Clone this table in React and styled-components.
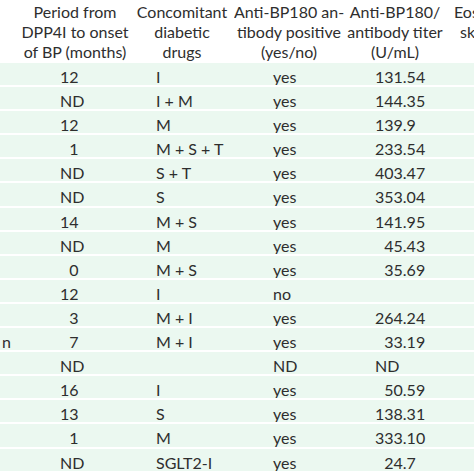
import React from "react";
import styled, { createGlobalStyle } from "styled-components";

const GlobalStyle = createGlobalStyle`
  html, body {
    margin: 0;
    padding: 0;
    background: #ffffff;
  }
  body {
    font-family: "Lato", "Liberation Sans", sans-serif;
    color: #2e2e2e;
  }
`;

const FS = "\u2007";

const rows = [
  ["", "12", "I", "yes", "131.54"],
  ["", "ND", "I + M", "yes", "144.35"],
  ["", "12", "M", "yes", "139.9"],
  ["", FS + "1", "M + S + T", "yes", "233.54"],
  ["", "ND", "S + T", "yes", "403.47"],
  ["", "ND", "S", "yes", "353.04"],
  ["", "14", "M + S", "yes", "141.95"],
  ["", "ND", "M", "yes", FS + "45.43"],
  ["", FS + "0", "M + S", "yes", FS + "35.69"],
  ["", "12", "I", "no", ""],
  ["", FS + "3", "M + I", "yes", "264.24"],
  ["n", FS + "7", "M + I", "yes", FS + "33.19"],
  ["", "ND", "", "ND", "ND"],
  ["", "16", "I", "yes", FS + "50.59"],
  ["", "13", "S", "yes", "138.31"],
  ["", FS + "1", "M", "yes", "333.10"],
  ["", "ND", "SGLT2-I", "yes", FS + "24.7"],
];

const App = () => {
  return (
    <>
      <GlobalStyle />
      <Page>
        <HeaderRow>
          <HeadCell />
          <HeadCell>
            Period from
            <br />
            DPP4I to onset
            <br />
            of BP (months)
          </HeadCell>
          <HeadCell>
            Concomitant
            <br />
            diabetic
            <br />
            drugs
          </HeadCell>
          <HeadCell>
            Anti-BP180 an-
            <br />
            tibody positive
            <br />
            (yes/no)
          </HeadCell>
          <HeadCell>
            Anti-BP180/
            <br />
            antibody titer
            <br />
            (U/mL)
          </HeadCell>
          <HeadCell $align="left">
            <HeadLine $indent={8}>Eosinophils</HeadLine>
            <HeadLine $indent={14}>skin lesion</HeadLine>
          </HeadCell>
        </HeaderRow>
        <Body>
          {rows.map((r, i) => (
            <Row key={i}>
              <Cell $pad={2}>{r[0]}</Cell>
              <Cell $pad={40}>{r[1]}</Cell>
              <Cell $pad={26}>{r[2]}</Cell>
              <Cell $pad={39}>{r[3]}</Cell>
              <Cell $pad={31}>{r[4]}</Cell>
              <Cell />
            </Row>
          ))}
        </Body>
      </Page>
    </>
  );
};

const columns = "20px 110px 104px 110px 102px 1fr";

const Page = styled.div`
  width: 474px;
  height: 474px;
  overflow: hidden;
  background: #ffffff;
`;

const HeaderRow = styled.div`
  display: grid;
  grid-template-columns: ${columns};
  height: 63px;
  padding-top: 2px;
  box-sizing: border-box;
`;

const HeadCell = styled.div`
  font-size: 16px;
  line-height: 20px;
  text-align: ${({ $align }) => $align || "center"};
  white-space: nowrap;
  overflow: hidden;
`;

const HeadLine = styled.div`
  padding-left: ${({ $indent }) => $indent}px;
`;

const Body = styled.div`
  display: flex;
  flex-direction: column;
  gap: 2px;
`;

const Row = styled.div`
  display: grid;
  grid-template-columns: ${columns};
  height: 22.1px;
  background: #ebf8f0;
`;

const Cell = styled.div`
  font-size: 16px;
  line-height: 22px;
  padding-top: 3px;
  padding-left: ${({ $pad }) => $pad || 0}px;
  white-space: nowrap;
  overflow: hidden;
`;

export default App;
